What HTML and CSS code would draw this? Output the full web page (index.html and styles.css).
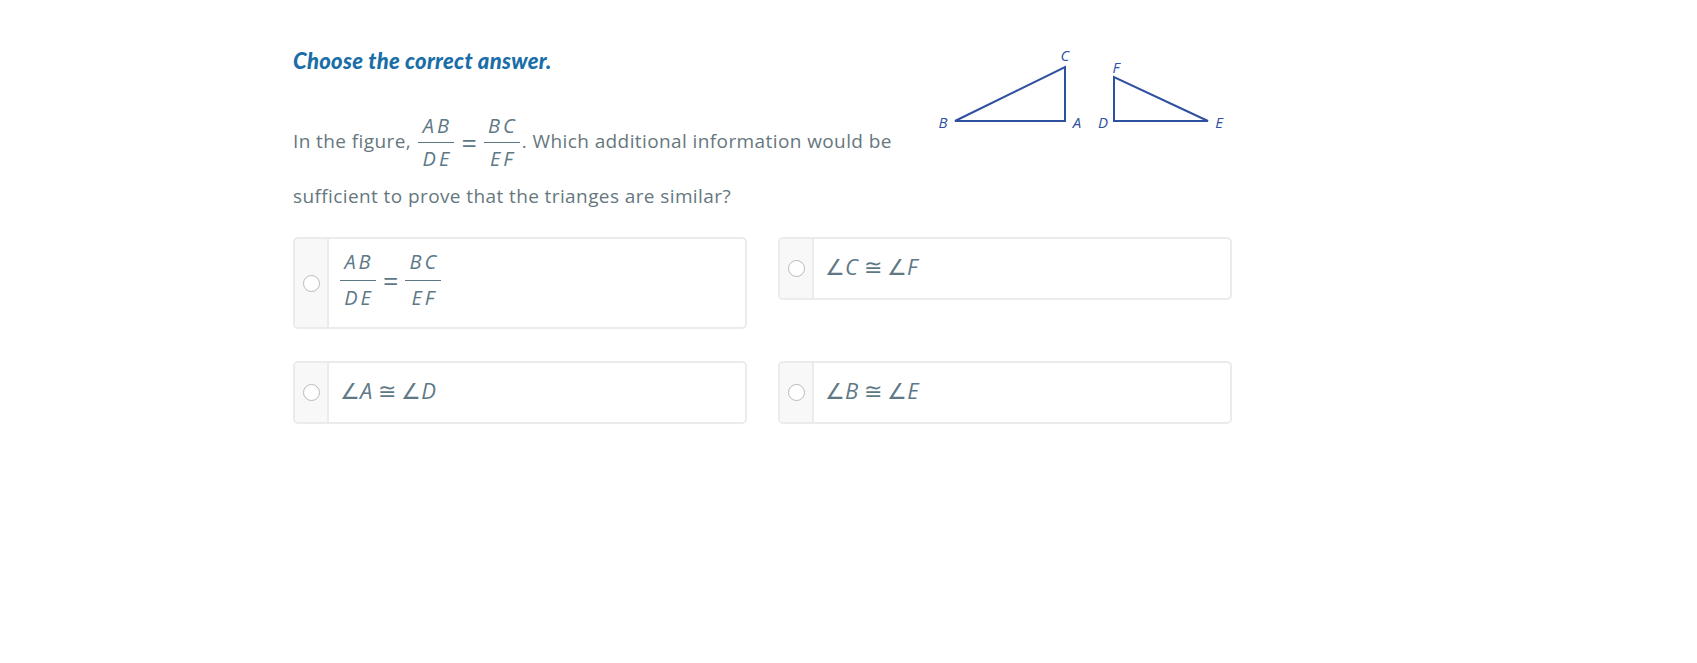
FILE: index.html
```html
<!DOCTYPE html>
<html lang="en">
<head>
<meta charset="utf-8">
<title>Choose the correct answer</title>
<link rel="stylesheet" href="styles.css">
</head>
<body>
<main class="page">
  <section class="question">
    <div class="question-text">
      <h1 class="instructions">Choose the correct answer.</h1>
      <p class="stem">In the figure, <span class="frac"><span class="num">AB</span><span class="den">DE</span></span><span class="eq">=</span><span class="frac"><span class="num">BC</span><span class="den">EF</span></span>. Which additional information would be sufficient to prove that the trianges are similar?</p>
    </div>
    <figure class="diagram">
      <svg width="300" height="95" viewBox="0 0 300 95" xmlns="http://www.w3.org/2000/svg">
        <g fill="none" stroke="#2f50a0" stroke-width="2" stroke-linejoin="miter">
          <polygon points="23,79 133,79 133,25"/>
          <polygon points="182,79 182,35 276,79"/>
        </g>
        <g class="lbl" fill="#2f50a0" text-anchor="middle" dominant-baseline="central">
          <text x="11" y="80">B</text>
          <text x="133" y="13">C</text>
          <text x="145" y="80">A</text>
          <text x="171" y="80">D</text>
          <text x="184" y="25">F</text>
          <text x="287" y="80">E</text>
        </g>
      </svg>
    </figure>
  </section>

  <div class="choices">
    <label class="choice">
      <span class="choice-radio"><span class="radio"></span></span>
      <span class="choice-body choice-body--frac math"><span class="frac"><span class="num">AB</span><span class="den">DE</span></span><span class="eq">=</span><span class="frac"><span class="num">BC</span><span class="den">EF</span></span></span>
    </label>
    <label class="choice">
      <span class="choice-radio"><span class="radio"></span></span>
      <span class="choice-body math"><span class="op">∠</span><i>C</i><span class="op cong">≅</span><span class="op">∠</span><i>F</i></span>
    </label>
    <label class="choice">
      <span class="choice-radio"><span class="radio"></span></span>
      <span class="choice-body math"><span class="op">∠</span><i>A</i><span class="op cong">≅</span><span class="op">∠</span><i>D</i></span>
    </label>
    <label class="choice">
      <span class="choice-radio"><span class="radio"></span></span>
      <span class="choice-body math"><span class="op">∠</span><i>B</i><span class="op cong">≅</span><span class="op">∠</span><i>E</i></span>
    </label>
  </div>
</main>
</body>
</html>
```

FILE: styles.css
```css
* { box-sizing: border-box; }

body {
  margin: 0;
  background: #ffffff;
  font-family: "Open Sans", Lato, sans-serif;
  color: #66777e;
}

.page {
  padding: 48px 0 0 293px;
  width: 1232px;
}

.question {
  display: flex;
  justify-content: space-between;
  align-items: flex-start;
}

.question-text {
  width: 625px;
}

.instructions {
  margin: 0;
  font-family: Lato, "Open Sans", sans-serif;
  font-size: 22px;
  line-height: 26px;
  font-weight: 900;
  font-style: italic;
  letter-spacing: 0.3px;
  color: #1a6ea8;
}

.stem {
  margin: 40px 0 0;
  font-size: 19px;
  letter-spacing: 0.4px;
  line-height: 54px;
}

.frac {
  display: inline-flex;
  flex-direction: column;
  align-items: center;
  vertical-align: middle;
  line-height: 1;
  font-style: italic;
  font-size: 20px;
  color: #5e7886;
  letter-spacing: 3px;
  margin: 0 2px;
}

.frac .num {
  padding: 0 2px 6px 4px;
  border-bottom: 1px solid #5e7886;
  min-width: 36px;
  text-align: center;
}

.frac .den {
  padding: 6px 2px 0 4px;
  text-align: center;
}

.eq {
  color: #5e7886;
  font-size: 27px;
  margin: 0 5px;
  vertical-align: middle;
  line-height: 1;
  letter-spacing: 0;
}

.diagram {
  margin: -6px 0 0;
  width: 300px;
  height: 95px;
}

.diagram svg { display: block; }

.lbl {
  font-family: "Open Sans", Lato, sans-serif;
  font-size: 15px;
  font-style: italic;
}

.choices {
  margin-top: 14px;
  display: grid;
  grid-template-columns: 454px 454px;
  column-gap: 31px;
  row-gap: 32px;
  align-items: start;
}

.choice {
  display: flex;
  border: 2px solid #ebebeb;
  border-radius: 5px;
  background: #ffffff;
  cursor: pointer;
}

.choice-radio {
  flex: 0 0 34px;
  display: flex;
  align-items: center;
  justify-content: center;
  background: #f8f8f8;
  border-right: 2px solid #ebebeb;
  border-radius: 3px 0 0 3px;
}

.radio {
  width: 17px;
  height: 17px;
  border: 1px solid #b9b9b9;
  border-radius: 50%;
  background: #ffffff;
}

.choice-body {
  padding: 15px 11px 20px;
  font-size: 22px;
  line-height: 24px;
  color: #5e7886;
}

.choice-body--frac {
  padding-top: 13px;
  padding-bottom: 19px;
}

.choice-body .frac { margin: 0; }
.choice-body .frac .num { padding-bottom: 8px; min-width: 36px; }
.choice-body .frac .den { padding-top: 7px; }
.choice-body .eq { margin: 0 7px; }

.math i {
  font-style: italic;
  letter-spacing: 1px;
}

.op {
  font-size: 22px;
}

.cong {
  margin: 0 5px;
}
```
